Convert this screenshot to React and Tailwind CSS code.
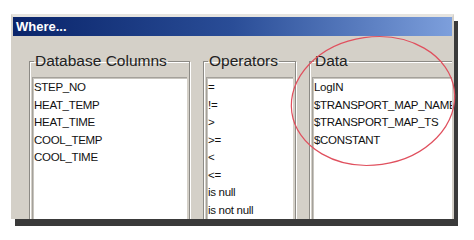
import React from 'react';

const columns = ['STEP_NO', 'HEAT_TEMP', 'HEAT_TIME', 'COOL_TEMP', 'COOL_TIME'];
const operators = ['=', '!=', '>', '>=', '<', '<=', 'is null', 'is not null'];
const data = ['LogIN', '$TRANSPORT_MAP_NAME', '$TRANSPORT_MAP_TS', '$CONSTANT'];

const Group = ({ title, items, width }) => (
    <fieldset className={`${width} shrink-0 h-[190px] border border-[#8c8a85] shadow-[1px_1px_0_#fff,inset_1px_1px_0_#fff] px-[2px] pb-0 min-w-0`}>
        <legend className="ml-[2px] px-[1px] text-[15.5px] leading-[18px] text-[#222]">{title}</legend>
        <div className="mt-[7px] h-[160px] bg-white border-l border-t border-[#a4a19b] shadow-[inset_1px_1px_0_#c8c5be] pt-[1px] pl-[1px]">
            {items.map(i => (
                <div key={i} className="text-[11.5px] tracking-[-0.3px] leading-[17.5px] text-[#111] whitespace-nowrap">{i}</div>
            ))}
        </div>
    </fieldset>
);

const App = () => {
    return (
        <div className="relative w-[474px] h-[240px] bg-white pl-[11px] pt-[14px] font-['Liberation_Sans',Arial,sans-serif]">
            <div className="w-[443px] h-[205px] bg-[#d4d0c8] border-t-[3px] border-x-2 border-t-[#e6e4df] border-x-[#d4d0c8] shadow-[4px_7px_0_#3a3a3a] overflow-hidden flex flex-col">
                <div className="h-[19px] shrink-0 bg-gradient-to-r from-[#0a246a] via-[#2a4d97] to-[#7d9fdc] flex items-center pl-[3px]">
                    <span className="text-white font-bold text-[13px] leading-none">Where...</span>
                </div>
                <div className="flex gap-[13px] pl-[16px] pt-[16px]">
                    <Group title="Database Columns" items={columns} width="w-[161px]" />
                    <Group title="Operators" items={operators} width="w-[93px]" />
                    <Group title="Data" items={data} width="w-[200px]" />
                </div>
            </div>
            <svg className="absolute left-0 top-0 pointer-events-none" width="474" height="240" viewBox="0 0 474 240">
                <ellipse cx="373" cy="101" rx="82" ry="64" transform="rotate(-8 373 101)" fill="none" stroke="#e0505e" strokeWidth="1.2" />
            </svg>
        </div>
    );
};

export default App;
